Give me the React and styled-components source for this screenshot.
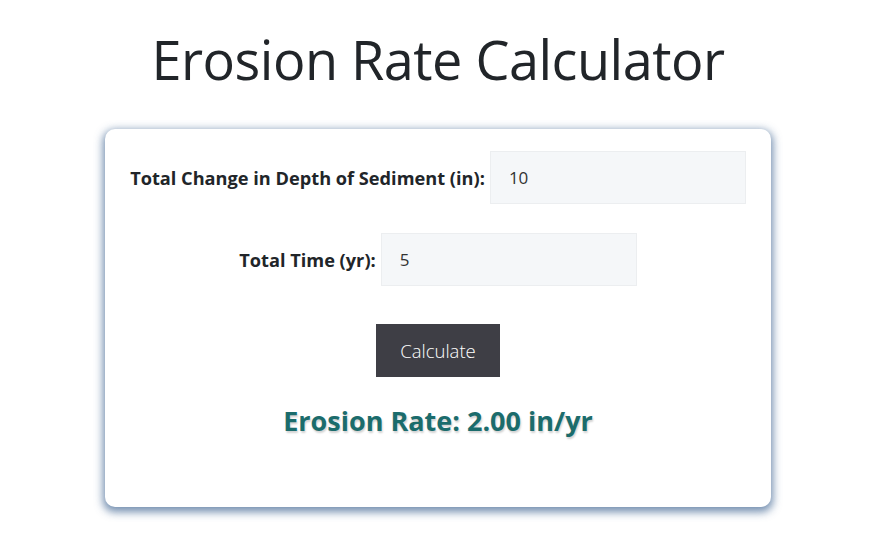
import styled, { createGlobalStyle } from "styled-components";

const GlobalStyle = createGlobalStyle`
    body {
        margin: 0;
        background: #ffffff;
        font-family: "Open Sans", "Noto Sans", sans-serif;
        color: #212529;
    }
`;

const Page = styled.div`
    display: flex;
    flex-direction: column;
    align-items: center;
    padding: 23px 6px 30px 0;
`;

const Title = styled.h1`
    margin: 0 0 34px;
    font-size: 54px;
    font-weight: 400;
    line-height: 72px;
    color: #212529;
    letter-spacing: -0.5px;
`;

const Card = styled.div`
    display: flex;
    flex-direction: column;
    align-items: center;
    width: 666px;
    height: 378px;
    box-sizing: border-box;
    padding: 22px 20px 0;
    background: #ffffff;
    border-radius: 10px;
    box-shadow: 0 3px 8px 2px rgba(62, 100, 145, 0.72);
`;

const Row = styled.div`
    display: flex;
    align-items: center;
    gap: 5px;
    margin-bottom: ${({ $gap }) => $gap}px;
`;

const Label = styled.label`
    font-size: 18.2px;
    font-weight: 700;
    color: #212529;
`;

const Input = styled.input`
    width: 256px;
    height: 53px;
    box-sizing: border-box;
    padding: 0 18px;
    border: 1px solid #eceef0;
    background: #f5f7f9;
    font-family: inherit;
    font-size: 17px;
    color: #333;
    outline: none;
`;

const Button = styled.button`
    width: 124px;
    height: 53px;
    border: none;
    background: #3e3e45;
    color: #ffffff;
    font-family: inherit;
    font-size: 18.5px;
    font-weight: 300;
    cursor: pointer;
    margin-bottom: 25px;
`;

const Result = styled.div`
    font-size: 27px;
    font-weight: 700;
    color: #1b6c6c;
    text-shadow: 1px 2px 2px rgba(0, 0, 0, 0.18);
`;

export default function App() {
    return (
        <>
            <GlobalStyle />
            <Page>
                <Title>Erosion Rate Calculator</Title>
                <Card>
                    <Row $gap={29}>
                        <Label>Total Change in Depth of Sediment (in):</Label>
                        <Input type="number" defaultValue="10" />
                    </Row>
                    <Row $gap={38}>
                        <Label>Total Time (yr):</Label>
                        <Input type="number" defaultValue="5" />
                    </Row>
                    <Button>Calculate</Button>
                    <Result>Erosion Rate: 2.00 in/yr</Result>
                </Card>
            </Page>
        </>
    );
}
